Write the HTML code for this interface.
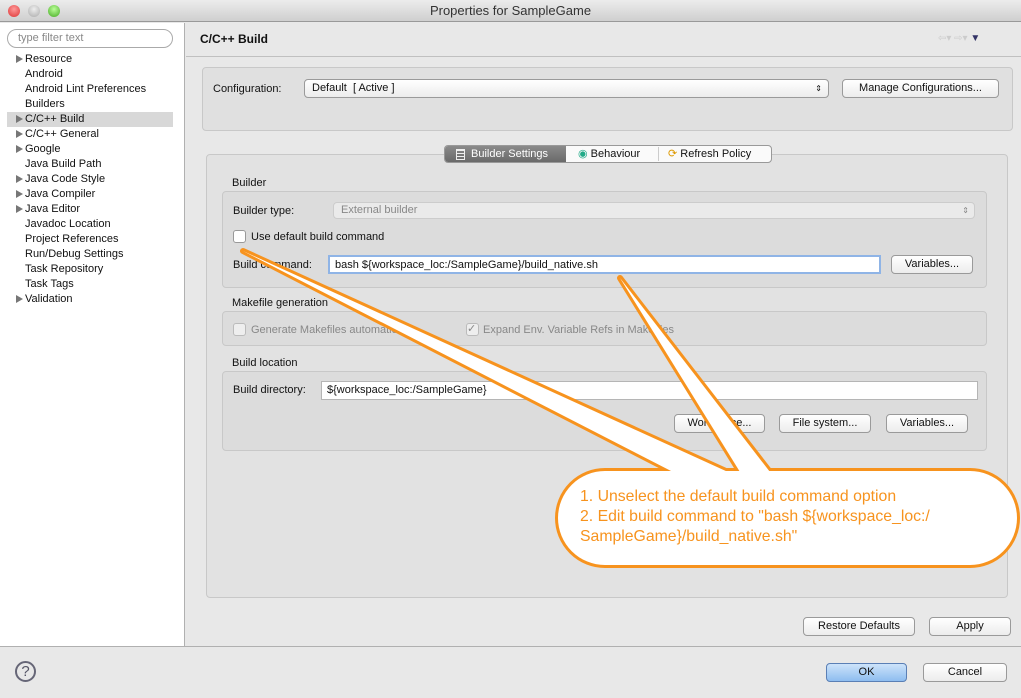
<!DOCTYPE html>
<html><head><meta charset="utf-8"><style>
*{box-sizing:border-box;margin:0;padding:0}
body{width:1021px;height:698px;overflow:hidden;background:#e8e8e8;font-family:"Liberation Sans",sans-serif;font-size:11px;color:#111;position:relative}
.a{position:absolute}
.btn{position:absolute;height:19px;border:1px solid #9a9a9a;border-radius:4px;background:linear-gradient(#fff,#ececec);text-align:center;line-height:17px;font-size:11px}
.grp{position:absolute;border:1px solid #c8c8c8;border-radius:4px;background:#dcdcdc}
.inp{position:absolute;height:19px;background:#fff;border:1px solid #b5b5b5;padding-left:5px;line-height:17px}
.tree div{height:15px;line-height:15px;padding-left:25px;position:relative}
.tri{position:absolute;left:16px;top:3px;width:0;height:0;border-left:7px solid #777;border-top:4px solid transparent;border-bottom:4px solid transparent}
</style></head><body>
<div class="a" style="left:0;top:0;width:1021px;height:22px;background:linear-gradient(#ececec,#cfcfcf);border-bottom:1px solid #999;text-align:center;line-height:22px;font-size:13px;color:#333">Properties for SampleGame</div>
<div class="a" style="left:8px;top:5px;width:12px;height:12px;border-radius:50%;background:radial-gradient(circle at 50% 35%,#f99,#d33)"></div>
<div class="a" style="left:28px;top:5px;width:12px;height:12px;border-radius:50%;background:radial-gradient(circle at 50% 35%,#eee,#aaa)"></div>
<div class="a" style="left:48px;top:5px;width:12px;height:12px;border-radius:50%;background:radial-gradient(circle at 50% 35%,#bf9,#4a2)"></div>
<div class="a" style="left:0;top:23px;width:185px;height:623px;background:#fff;border-right:1px solid #b0b0b0"></div>
<div class="a" style="left:7px;top:29px;width:166px;height:19px;border:1px solid #aaa;border-radius:10px;color:#888;padding-left:10px;line-height:17px;font-size:11px">type filter text</div>
<div class="a tree" style="left:0;top:52px;width:185px">
<div><span class="tri"></span>Resource</div><div>Android</div><div>Android Lint Preferences</div><div>Builders</div>
<div style="background:#d8d8d8;width:166px;margin-left:7px;padding-left:18px"><span class="tri" style="left:9px"></span>C/C++ Build</div>
<div><span class="tri"></span>C/C++ General</div><div><span class="tri"></span>Google</div><div>Java Build Path</div>
<div><span class="tri"></span>Java Code Style</div><div><span class="tri"></span>Java Compiler</div><div><span class="tri"></span>Java Editor</div>
<div>Javadoc Location</div><div>Project References</div><div>Run/Debug Settings</div><div>Task Repository</div><div>Task Tags</div><div><span class="tri"></span>Validation</div>
</div>
<div class="a" style="left:186px;top:23px;width:835px;height:34px;border-bottom:1px solid #c0c0c0;background:#e8e8e8"></div>
<div class="a" style="left:200px;top:32px;font-weight:bold;font-size:12px">C/C++ Build</div>
<div class="a" style="left:938px;top:33px;color:#ccc;font-size:10px">⇦▾ ⇨▾ <span style="color:#336">▼</span></div>
<div class="grp" style="left:202px;top:67px;width:811px;height:64px;background:#e0e0e0"></div>
<div class="a" style="left:213px;top:83px">Configuration:</div>
<div class="btn" style="left:304px;top:79px;width:525px;text-align:left;padding-left:7px">Default &nbsp;[ Active ]<span style="position:absolute;right:6px;font-size:8px">⇕</span></div>
<div class="btn" style="left:842px;top:79px;width:157px">Manage Configurations...</div>
<div class="grp" style="left:206px;top:154px;width:802px;height:444px;background:#e2e2e2"></div>
<div class="a" style="left:444px;top:145px;width:328px;height:18px;border:1px solid #999;border-radius:4px;background:#fafafa"></div>
<div class="a" style="left:445px;top:146px;width:121px;height:16px;background:linear-gradient(#8a8a8a,#6a6a6a);color:#fff;line-height:16px;padding-left:26px;border-radius:3px 0 0 3px">Builder Settings</div>
<div class="a" style="left:456px;top:149px;width:9px;height:11px;border:1px solid #eee;background:repeating-linear-gradient(#eee 0 1px,transparent 1px 3px)"></div>
<div class="a" style="left:578px;top:148px;line-height:13px"><span style="color:#2a8">◉</span> Behaviour</div>
<div class="a" style="left:658px;top:147px;width:1px;height:14px;background:#ccc"></div>
<div class="a" style="left:668px;top:148px;line-height:13px"><span style="color:#d90">⟳</span> Refresh Policy</div>
<div class="a" style="left:232px;top:177px">Builder</div>
<div class="grp" style="left:222px;top:191px;width:765px;height:97px"></div>
<div class="a" style="left:233px;top:205px">Builder type:</div>
<div class="a" style="left:333px;top:202px;width:642px;height:17px;border:1px solid #ccc;border-radius:4px;background:#eaeaea;color:#888;padding-left:7px;line-height:15px">External builder<span style="position:absolute;right:5px;font-size:8px">⇕</span></div>
<div class="a" style="left:233px;top:230px;width:13px;height:13px;border:1px solid #999;border-radius:3px;background:#fff"></div>
<div class="a" style="left:251px;top:231px">Use default build command</div>
<div class="a" style="left:233px;top:259px">Build command:</div>
<div class="inp" style="left:328px;top:255px;width:553px;border:2px solid #8fb4e6">bash ${workspace_loc:/SampleGame}/build_native.sh</div>
<div class="btn" style="left:891px;top:255px;width:82px">Variables...</div>
<div class="a" style="left:232px;top:297px">Makefile generation</div>
<div class="grp" style="left:222px;top:311px;width:765px;height:35px"></div>
<div class="a" style="left:233px;top:323px;width:13px;height:13px;border:1px solid #bbb;border-radius:3px;background:#eee"></div>
<div class="a" style="left:251px;top:324px;color:#888">Generate Makefiles automatically</div>
<div class="a" style="left:466px;top:323px;width:13px;height:13px;border:1px solid #bbb;border-radius:3px;background:#eee;color:#888;font-size:11px;line-height:11px">✓</div>
<div class="a" style="left:483px;top:324px;color:#888">Expand Env. Variable Refs in Makefiles</div>
<div class="a" style="left:232px;top:357px">Build location</div>
<div class="grp" style="left:222px;top:371px;width:765px;height:80px"></div>
<div class="a" style="left:233px;top:384px">Build directory:</div>
<div class="inp" style="left:321px;top:381px;width:657px">${workspace_loc:/SampleGame}</div>
<div class="btn" style="left:674px;top:414px;width:91px">Workspace...</div>
<div class="btn" style="left:779px;top:414px;width:92px">File system...</div>
<div class="btn" style="left:886px;top:414px;width:82px">Variables...</div>
<svg class="a" style="left:0;top:0" width="1021" height="698">
<g fill="#fff" stroke="#f7931e" stroke-width="6" stroke-linejoin="round">
<polygon points="243,251 673,472 728,472"/>
<polygon points="620,278 740,472 770,472"/>
<rect x="558" y="471" width="459" height="94" rx="47"/>
</g>
<g fill="#fff">
<polygon points="243,251 673,472 728,472"/>
<polygon points="620,278 740,472 770,472"/>
<rect x="558" y="471" width="459" height="94" rx="47"/>
</g>
</svg>
<div class="a" style="left:580px;top:487px;color:#f7931e;font-size:15.8px;line-height:20px">1. Unselect the default build command option<br>2. Edit build command to "bash ${workspace_loc:/<br>SampleGame}/build_native.sh"</div>
<div class="btn" style="left:803px;top:617px;width:112px">Restore Defaults</div>
<div class="btn" style="left:929px;top:617px;width:82px">Apply</div>
<div class="a" style="left:0;top:646px;width:1021px;height:52px;border-top:1px solid #b0b0b0;background:#e8e8e8"></div>
<div class="a" style="left:15px;top:661px;width:21px;height:21px;border:2px solid #667;border-radius:50%;text-align:center;line-height:17px;font-size:15px;color:#556">?</div>
<div class="btn" style="left:826px;top:663px;width:81px;background:linear-gradient(#cde3fa,#8ebdf0);border-color:#5a7fb5">OK</div>
<div class="btn" style="left:923px;top:663px;width:84px">Cancel</div>
</body></html>
